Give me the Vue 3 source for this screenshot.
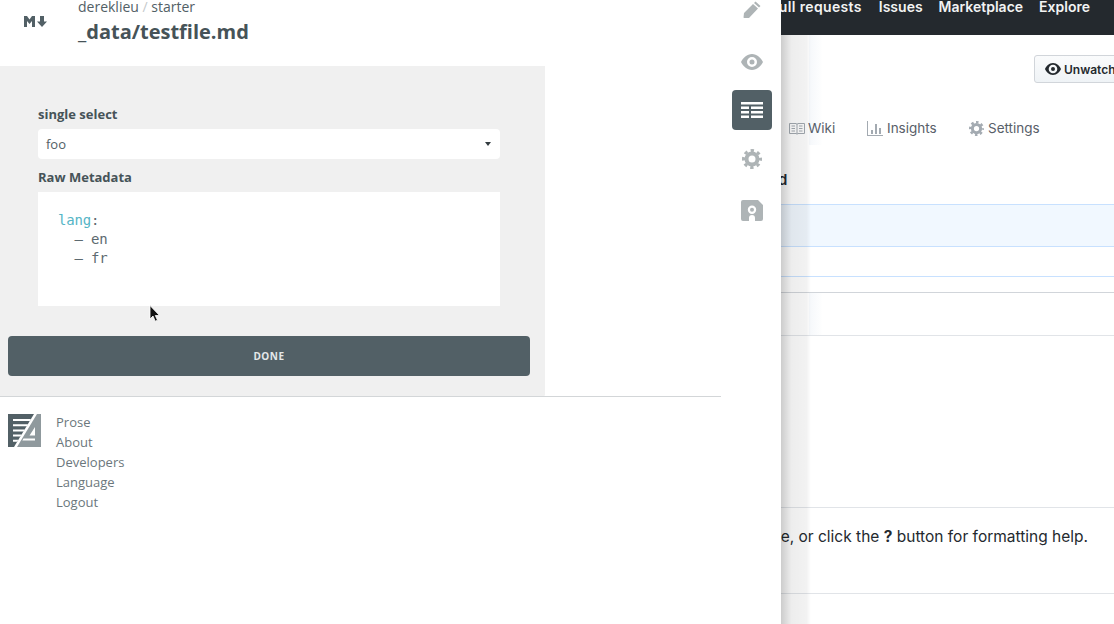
<script setup>
const links = ['Prose', 'About', 'Developers', 'Language', 'Logout']
const nav = ['Pull requests', 'Issues', 'Marketplace', 'Explore']
</script>

<template>
  <div class="page">
    <div class="app">
      <div class="content">
        <header class="head">
          <svg class="md" viewBox="0 0 23 11" width="23" height="11">
            <path fill="#526066" d="M0 11V0h3l2.500 3.500L8 0h3v11H8V5L5.500 8 3 5v6zM16 0h4v5.500h3L18 11 13 5.500h3z" />
          </svg>
          <div class="titles">
            <div class="crumb">dereklieu <span class="slash">/</span> starter</div>
            <h1 class="title">_data/testfile.md</h1>
          </div>
        </header>
        <section class="panel">
          <div class="form">
            <label class="label first">single select</label>
            <div class="select">foo<span class="caret"></span></div>
            <label class="label second">Raw Metadata</label>
            <pre class="code"><span class="key">lang</span>:
  – en
  – fr</pre>
          </div>
          <button class="done">DONE</button>
        </section>
        <footer class="foot">
          <svg class="logo" viewBox="0 0 33 33" width="33" height="33">
            <path fill="#526066" d="M0 0h26L6 33H0z" />
            <path fill="#fff" d="M5 5h18l-1.200 2H5zM5 10.200h15l-1.200 2H5zM5 15.400h11.800l-1.200 2H5zM5 20.600h8.600l-1.200 2H5zM5 25.800h5.400l-1.200 2H5z" />
            <path fill="#8f999d" d="M29 0h4v33H9z" />
            <path fill="#fff" d="M27 13v8.500h-5.500zM15.500 24.500H27v2H14.300z" />
          </svg>
          <nav class="links">
            <a v-for="l in links" :key="l">{{ l }}</a>
          </nav>
        </footer>
        <svg class="cursor" viewBox="0 0 12 18" width="12" height="18">
          <path fill="#111" stroke="#fff" stroke-width=".8" d="M1 .5v13.500l3-3 2.200 5.200 2.300-1L6.300 10.500H10.500z" />
        </svg>
      </div>
      <aside class="rail">
        <a class="tool">
          <svg viewBox="0 0 20 20" width="20" height="20"><path fill="#aeb4b6" d="M13.500 1.500l5 4.500L17 7.500 12 3zM11 4l5 4.500L7 18H2l-.5-.5L2 13z" /></svg>
        </a>
        <a class="tool eye">
          <svg viewBox="0 0 22 16" width="22" height="16"><path fill="#aeb4b6" fill-rule="evenodd" d="M11 0c5 0 9 4 11 8-2 4-6 8-11 8S2 12 0 8c2-4 6-8 11-8zm0 3a5 5 0 100 10 5 5 0 000-10zm0 2.500a2.500 2.500 0 110 5 2.500 2.500 0 010-5z" /></svg>
        </a>
        <a class="tool active">
          <svg viewBox="0 0 22 16" width="22" height="16"><path fill="#fff" d="M0 0h22v2.500H0zM0 4.500h8v2.500H0zM10 4.500h12v2.500H10zM0 9h8v2.500H0zM10 9h12v2.500H10zM0 13.500h8V16H0zM10 13.500h12V16H10z" /></svg>
        </a>
        <a class="tool">
          <svg viewBox="0 0 20 20" width="20" height="20">
            <circle cx="10" cy="10" r="5.500" fill="none" stroke="#aeb4b6" stroke-width="4" />
            <circle cx="10" cy="10" r="8.500" fill="none" stroke="#aeb4b6" stroke-width="3" stroke-dasharray="3.340 3.340" stroke-dashoffset="1.670" />
          </svg>
        </a>
        <a class="tool save">
          <svg viewBox="0 0 22 21" width="22" height="21"><path fill="#aeb4b6" fill-rule="evenodd" d="M2 0h15l5 5v14a2 2 0 01-2 2h-6v-3a3 3 0 00-6 0v3H2a2 2 0 01-2-2V2a2 2 0 012-2zm9 5.500a4.200 4.200 0 100 8.400 4.200 4.200 0 000-8.400zm0 2.200a2 2 0 110 4 2 2 0 010-4z" /></svg>
        </a>
      </aside>
    </div>

    <main class="behind">
      <div class="shade"></div>
      <div class="shade pale top"></div>
      <div class="shade pale mid"></div>
      <nav class="topbar">
        <a v-for="n in nav" :key="n">{{ n }}</a>
      </nav>
      <div class="actions">
        <button class="watch">
          <svg viewBox="0 0 16 12" width="16" height="12"><path fill="#24292e" fill-rule="evenodd" d="M8 0c4 0 7 3.500 8 6-1 2.500-4 6-8 6S1 8.500 0 6c1-2.500 4-6 8-6zm0 1.700a4.300 4.300 0 100 8.600 4.300 4.300 0 000-8.600zM8 4a2 2 0 110 4 2 2 0 010-4z" /></svg>
          Unwatch
        </button>
      </div>
      <div class="tabs">
        <a class="tab wiki">
          <svg viewBox="0 0 16 13" width="16" height="13"><path fill="none" stroke="#a3aab1" d="M.5 1.500h6.500l1 .7 1-.7h6.500v10H9l-1 .7-1-.7H.5zM8 2v10M2.500 4H6M2.500 6.500H6M2.500 9H6M10 4h3.500M10 6.500h3.500M10 9h3.500" /></svg>
          Wiki
        </a>
        <a class="tab insights">
          <svg viewBox="0 0 16 15" width="16" height="15"><path fill="#a3aab1" d="M0 0h1v14h15v1H0zM4 9h2v4H4zM8 3h2v10H8zM12 7h2v6h-2z" /></svg>
          Insights
        </a>
        <a class="tab settings">
          <svg viewBox="0 0 20 20" width="15" height="15">
            <circle cx="10" cy="10" r="5.500" fill="none" stroke="#a3aab1" stroke-width="4" />
            <circle cx="10" cy="10" r="8.500" fill="none" stroke="#a3aab1" stroke-width="3" stroke-dasharray="3.340 3.340" stroke-dashoffset="1.670" />
          </svg>
          Settings
        </a>
      </div>
      <div class="stray">d</div>
      <div class="row r1"></div>
      <div class="row r2"></div>
      <div class="row r3"></div>
      <div class="row r4"></div>
      <div class="row r5"></div>
      <div class="row r6">
        <p class="hint">Write above, or click the <b>?</b> button for formatting help.</p>
      </div>
    </main>
  </div>
</template>

<style>
html, body { margin: 0; background: #fff; }
</style>

<style scoped>
.page {
  display: flex;
  width: 1114px;
  height: 624px;
  overflow: hidden;
  font-family: "Open Sans", sans-serif;
  background: #fff;
}
.app {
  display: flex;
  flex: 0 0 781px;
  height: 624px;
  position: relative;
  z-index: 2;
  background: #fff;
}
.content {
  width: 721px;
  position: relative;
}
.head {
  display: flex;
  height: 66px;
  box-sizing: border-box;
  overflow: hidden;
}
.md {
  margin: 16px 0 0 24px;
  flex: none;
}
.titles {
  margin-left: 31px;
  margin-top: -3px;
}
.crumb {
  font-size: 14px;
  line-height: 20px;
  color: #526066;
}
.slash { color: #c5cacc; }
.title {
  margin: 1px 0 0;
  font-size: 20px;
  line-height: 28px;
  font-weight: 700;
  color: #465358;
}
.panel {
  width: 545px;
  height: 331px;
  background: #f0f0f0;
  border-bottom-right-radius: 3px;
  padding: 39px 15px 0 8px;
  box-sizing: border-box;
}
.form {
  width: 462px;
  margin-left: 30px;
}
.label {
  display: block;
  font-size: 13px;
  font-weight: 700;
  line-height: 18px;
  color: #465358;
}
.first { margin-bottom: 6px; }
.second { margin: 9px 0 6px; }
.select {
  height: 30px;
  background: #fff;
  border-radius: 4px;
  padding: 0 8px;
  font-size: 13px;
  line-height: 30px;
  color: #526066;
  position: relative;
  display: flex;
  justify-content: space-between;
  align-items: center;
}
.caret {
  width: 0;
  height: 0;
  border: 3px solid transparent;
  border-top: 4px solid #333c40;
  border-bottom: 0;
  margin-right: 1px;
}
.code {
  margin: 0;
  height: 114px;
  box-sizing: border-box;
  padding: 19px 20px 0;
  background: #fff;
  font-family: "DejaVu Sans Mono", monospace;
  font-size: 14px;
  letter-spacing: -.2px;
  line-height: 19px;
  color: #5d6a70;
}
.key { color: #55b5c6; }
.done {
  display: block;
  width: 522px;
  height: 40px;
  margin-top: 30px;
  padding: 0;
  border: 0;
  border-radius: 4px;
  background: #526066;
  color: #e4e8e9;
  font-family: inherit;
  font-size: 10px;
  font-weight: 700;
  letter-spacing: .5px;
}
.foot {
  display: flex;
  border-top: 1px solid #d3d6d8;
  margin-top: -1px;
  position: relative;
  padding: 17px 0 0 8px;
  background: transparent;
}
.logo { flex: none; }
.links {
  display: flex;
  flex-direction: column;
  margin: -2px 0 0 15px;
  font-size: 13px;
  line-height: 20px;
  color: #6b777c;
}
.cursor {
  position: absolute;
  left: 149px;
  top: 305px;
}
.rail {
  width: 60px;
  box-sizing: border-box;
  padding-left: 2px;
  display: flex;
  flex-direction: column;
  align-items: center;
  gap: 9px;
  margin-top: -10px;
}
.tool {
  width: 40px;
  height: 40px;
  flex: none;
  border-radius: 4px;
  display: flex;
  align-items: center;
  justify-content: center;
}
.eye { margin-top: 3px; }
.save { margin-top: 2px; }
.active { background: #526066; margin-top: -1px; }
.behind {
  flex: 1;
  min-width: 0;
  position: relative;
  overflow: hidden;
  font-family: Inter, "Liberation Sans", sans-serif;
  color: #24292e;
}
.shade {
  position: absolute;
  left: 0;
  top: 35px;
  bottom: 0;
  width: 30px;
  z-index: 1;
  background: linear-gradient(90deg, rgba(0,0,0,.2), rgba(0,0,0,.07) 35%, rgba(0,0,0,.05) 85%, rgba(0,0,0,0));
}
.pale {
  left: 28px;
  width: 14px;
  background: linear-gradient(90deg, rgba(60,110,170,.05), rgba(60,110,170,0));
}
.top { height: 110px; bottom: auto; }
.mid { top: 293px; height: 42px; bottom: auto; }
.topbar {
  height: 35px;
  background: #24292e;
  display: flex;
  justify-content: flex-end;
  gap: 16px;
  padding-right: 24px;
  font-size: 14px;
  font-weight: 600;
  line-height: 13px;
  color: #f2f3f3;
  white-space: nowrap;
}
.topbar a:first-child {
  letter-spacing: .35px;
  margin-right: 1px;
}
.actions {
  height: 83px;
  box-sizing: border-box;
  padding: 20px 0 0 253px;
}
.watch {
  width: 120px;
  height: 28px;
  flex: none;
  display: flex;
  align-items: center;
  gap: 3px;
  padding: 0 0 0 10px;
  border: 1px solid #d1d5da;
  border-radius: 3px;
  background: linear-gradient(#fafbfc, #eff3f6);
  font-family: inherit;
  font-size: 12px;
  font-weight: 600;
  color: #24292e;
  white-space: nowrap;
}
.tabs {
  display: flex;
  height: 20px;
  padding-left: 8px;
  font-size: 13.500px;
  line-height: 20px;
  color: #586069;
}
.tab {
  display: flex;
  align-items: center;
  gap: 3px;
}
.wiki { width: 78px; }
.insights { width: 102px; }
.settings { gap: 4px; }
.insights { gap: 4px; }
.stray {
  height: 66px;
  box-sizing: border-box;
  padding-top: 32px;
  text-indent: -3px;
  font-size: 15px;
  line-height: 20px;
  font-weight: 600;
}
.row { box-sizing: border-box; }
.r1 {
  height: 43px;
  border-top: 1px solid #c8e1ff;
  border-bottom: 1px solid #c8e1ff;
  background: #f1f8ff;
}
.r2 { height: 30px; border-bottom: 1px solid #c8e1ff; }
.r3 { height: 16px; border-bottom: 1px solid #d1d5da; }
.r4 { height: 43px; border-bottom: 1px solid #e1e4e8; }
.r5 { height: 172px; border-bottom: 1px solid #e1e4e8; }
.r6 {
  height: 86px;
  border-bottom: 1px solid #e1e4e8;
  display: flex;
  justify-content: flex-end;
  padding: 19px 26px 0 0;
  white-space: nowrap;
}
.hint {
  margin: 0;
  font-size: 15.500px;
  line-height: 20px;
  color: #24292e;
}
</style>
